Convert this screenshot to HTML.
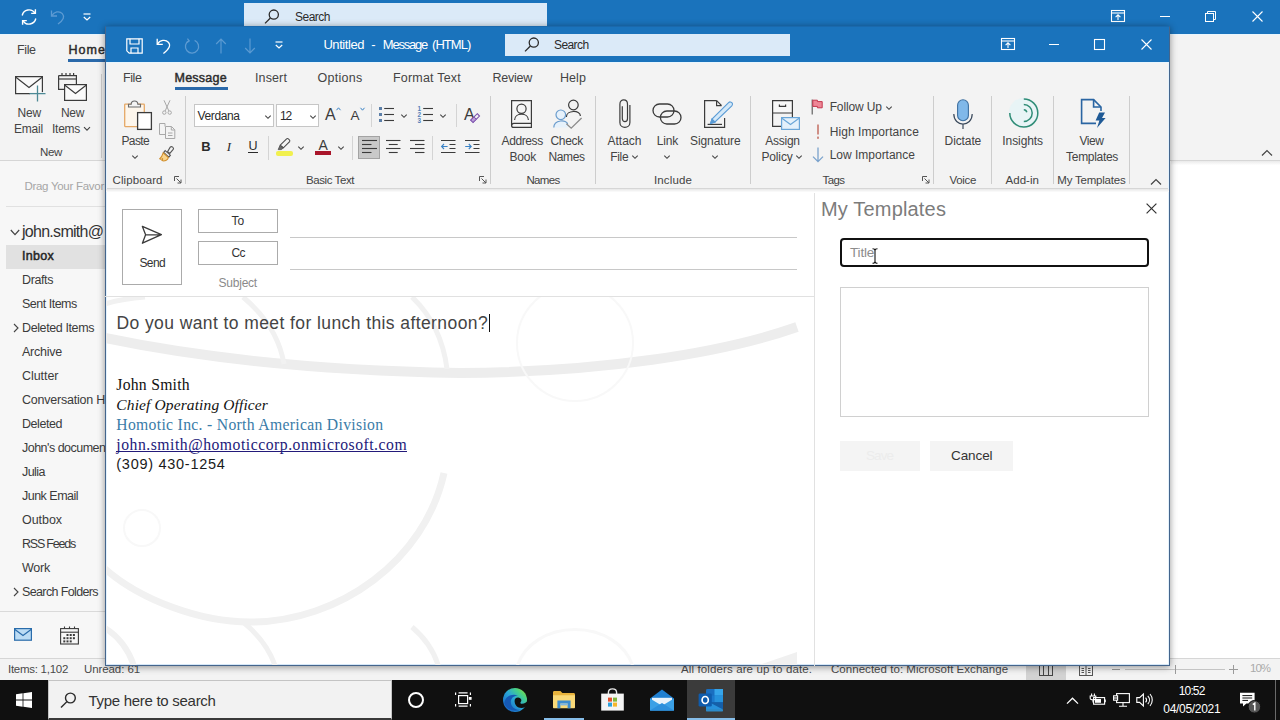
<!DOCTYPE html>
<html>
<head>
<meta charset="utf-8">
<title>Outlook</title>
<style>
*{box-sizing:border-box;margin:0;padding:0}
html,body{width:1280px;height:720px;overflow:hidden;background:#fff;font-family:"Liberation Sans",sans-serif;font-size:12px;color:#333}
.abs{position:absolute}
.t{position:absolute;white-space:nowrap;line-height:1}
svg{position:absolute;overflow:visible}
/* main window */
#mw-title{left:0;top:0;width:1280px;height:34px;background:#1a73bc}
#mw-ribbon{left:0;top:34px;width:1280px;height:127px;background:#f3f3f3;border-bottom:1px solid #d6d6d6}
#mw-left{left:0;top:161px;width:110px;height:497px;background:#f7f7f7}
#mw-status{left:0;top:658px;width:1280px;height:22px;background:#f3f3f3;border-top:1px solid #d6d6d6}
.search{background:#dbe9f6}
/* taskbar */
#tb{left:0;top:680px;width:1280px;height:40px;background:#101010}
/* compose window */
#cw{left:105px;top:26px;width:1065px;height:640px;background:#fff;border:1px solid #44658c;border-top-color:#1a69ad;box-shadow:0 1px 7px rgba(0,0,0,.42)}
#cw-title{left:0;top:0;width:1063px;height:35px;background:#1a73bc}
#cw-ribbon{left:0;top:35px;width:1063px;height:127px;background:#f3f3f3;border-bottom:1px solid #d6d6d6}
.sep{position:absolute;width:1px;background:#c8c8c8}
.gl{position:absolute;white-space:nowrap;line-height:1;font-size:11.5px;color:#444}
.rl{position:absolute;white-space:nowrap;line-height:16px;font-size:12px;color:#333;text-align:center}
.fold{position:absolute;left:22px;white-space:nowrap;line-height:1;font-size:12.5px;color:#333}
</style>
</head>
<body>
<!-- ============ MAIN WINDOW ============ -->
<div class="abs" id="mw-title"></div>
<div class="abs" id="mw-ribbon"></div>
<div class="abs" id="mw-left"></div>
<div class="abs" id="mw-status"></div>
<svg style="left:19px;top:7px" width="20" height="20" viewBox="0 0 20 20"><g fill="none" stroke="#fff" stroke-width="1.4"><path d="M3.2 8.5A7 7 0 0 1 16 6.2"/><path d="M16.8 11.5A7 7 0 0 1 4 13.8"/><path d="M16.4 2.2V6.4H12.2"/><path d="M3.6 17.8V13.6H7.8"/></g></svg>
<svg style="left:49px;top:8px" width="18" height="18" viewBox="0 0 18 18"><g fill="none" stroke="#5d9bd3" stroke-width="1.3"><path d="M2.5 2.5V8H8"/><path d="M2.8 7.8C5 3.5 10.5 2.6 13.3 5.6C16 8.6 14.5 12 9 16"/></g></svg>
<svg style="left:82px;top:12px" width="10" height="10" viewBox="0 0 10 10"><g fill="none" stroke="#fff" stroke-width="1.2"><path d="M1.5 2H8.5"/><path d="M1.8 5L5 8L8.2 5"/></g></svg>
<div class="abs" style="left:244px;top:3px;width:303px;height:27px;background:#dbeaf8"></div>
<svg style="left:263px;top:8px" width="18" height="18" viewBox="0 0 18 18"><g fill="none" stroke="#2b2b2b" stroke-width="1.3"><circle cx="10.8" cy="6.6" r="4.6"/><path d="M7.4 10L2 15.4"/></g></svg>
<span class="t" style="left:295.0px;top:10.6px;font-size:12px;color:#2b2b2b;letter-spacing:-0.50px;">Search</span>
<svg style="left:1111px;top:10px" width="14" height="12" viewBox="0 0 14 12"><g fill="none" stroke="#fff" stroke-width="1.1"><rect x="0.5" y="0.5" width="13" height="11"/><path d="M0.5 3H13.5"/><path d="M7 10V5M4.6 7.2L7 4.8L9.4 7.2"/></g></svg>
<div class="abs" style="left:1160px;top:16px;width:10px;height:1px;background:#fff"></div>
<svg style="left:1205px;top:11px" width="11" height="11" viewBox="0 0 11 11"><g fill="none" stroke="#fff" stroke-width="1"><rect x="0.5" y="2.5" width="8" height="8"/><path d="M2.5 2.5V0.5H10.5V8.5H8.5"/></g></svg>
<svg style="left:1252px;top:11px" width="11" height="11" viewBox="0 0 11 11"><g fill="none" stroke="#fff" stroke-width="1.1"><path d="M0.5 0.5L10.5 10.5M10.5 0.5L0.5 10.5"/></g></svg>
<div class="abs" style="left:0px;top:34px;width:1280px;height:1px;background:#e8f5fd"></div>
<span class="t" style="left:17.0px;top:43.7px;font-size:12.5px;color:#444;letter-spacing:-0.39px;">File</span>
<span class="t" style="left:68.5px;top:43.7px;font-size:12.5px;color:#2b2b2b;letter-spacing:1.04px;-webkit-text-stroke:0.45px #2b2b2b;">Home</span>
<div class="abs" style="left:68px;top:59px;width:45px;height:2.5px;background:#2a69aa"></div>
<svg style="left:14px;top:75px" width="32" height="28" viewBox="0 0 32 28"><g fill="none" stroke="#3b3b3b" stroke-width="1.2"><path d="M1.6 1.6H28.4V18.6H1.6Z" fill="#fafafa"/><path d="M1.6 2L15 12.4L28.4 2"/></g><path d="M16 18.6H31" stroke="#f3f3f3" stroke-width="3"/><g stroke="#4d8a96" stroke-width="1.3" fill="none"><path d="M15.5 18.6H31.5M23.5 10.6V26.4"/></g></svg>
<span class="t" style="left:17.5px;top:107.1px;font-size:12px;color:#444;letter-spacing:-0.17px;">New</span>
<span class="t" style="left:14.0px;top:123.1px;font-size:12px;color:#444;letter-spacing:-0.20px;">Email</span>
<svg style="left:57px;top:72px" width="32" height="30" viewBox="0 0 32 30"><g fill="none" stroke="#3b3b3b" stroke-width="1.2"><path d="M1.6 3.6H19.4V13M1.6 3.6V17.4H7"/><path d="M1.6 7H19.4"/><path d="M5 1V4M9 1V4M13 1V4M16.6 1V4"/><rect x="7.6" y="12.6" width="21.8" height="15.8" fill="#fafafa"/><path d="M7.6 13L18.5 21.4L29.4 13"/></g></svg>
<span class="t" style="left:61.0px;top:107.1px;font-size:12px;color:#444;letter-spacing:-0.34px;">New</span>
<span class="t" style="left:52.0px;top:123.1px;font-size:12px;color:#444;letter-spacing:-0.27px;">Items</span>
<svg style="left:83px;top:126px" width="8" height="6" viewBox="0 0 8 6"><path d="M1 1.2L4 4.2L7 1.2" fill="none" stroke="#444" stroke-width="1.1"/></svg>
<span class="t" style="left:40.0px;top:146.6px;font-size:11.5px;color:#444;letter-spacing:-0.34px;">New</span>
<div class="abs" style="left:101px;top:74px;width:1px;height:84px;background:#d0d0d0"></div>
<svg style="left:1261px;top:149px" width="12" height="8" viewBox="0 0 12 8"><path d="M1 6.5L6 1.5L11 6.5" fill="none" stroke="#444" stroke-width="1.2"/></svg>
<div class="abs" style="left:1171px;top:161px;width:109px;height:4px;background:linear-gradient(#eaeaea,#fefefe)"></div>
<span class="t" style="left:24.4px;top:180.6px;font-size:11.5px;color:#a6a6a6;letter-spacing:-0.28px;">Drag Your Favor</span>
<div class="abs" style="left:6px;top:206px;width:100px;height:1px;background:#e1e1e1"></div>
<svg style="left:10px;top:229px" width="10" height="8" viewBox="0 0 10 8"><path d="M0.8 1L5 5.6L9.2 1" fill="none" stroke="#444" stroke-width="1.2"/></svg>
<span class="t" style="left:22.0px;top:224.3px;font-size:16px;color:#333;letter-spacing:-0.72px;">john.smith@</span>
<div class="abs" style="left:6px;top:245px;width:100px;height:24px;background:#e1e1e1"></div>
<span class="t" style="left:22.0px;top:249.7px;font-size:12.5px;color:#262626;letter-spacing:0.28px;-webkit-text-stroke:0.5px #262626;">Inbox</span>
<span class="t" style="left:22.0px;top:273.7px;font-size:12.5px;color:#3b3b3b;letter-spacing:-0.39px;">Drafts</span>
<span class="t" style="left:22.0px;top:297.7px;font-size:12.5px;color:#3b3b3b;letter-spacing:-0.50px;">Sent Items</span>
<span class="t" style="left:22.0px;top:321.7px;font-size:12.5px;color:#3b3b3b;letter-spacing:-0.39px;">Deleted Items</span>
<span class="t" style="left:22.0px;top:345.7px;font-size:12.5px;color:#3b3b3b;letter-spacing:-0.24px;">Archive</span>
<span class="t" style="left:22.0px;top:369.7px;font-size:12.5px;color:#3b3b3b;letter-spacing:-0.05px;">Clutter</span>
<span class="t" style="left:22.0px;top:393.7px;font-size:12.5px;color:#3b3b3b;letter-spacing:-0.23px;">Conversation H</span>
<span class="t" style="left:22.0px;top:417.7px;font-size:12.5px;color:#3b3b3b;letter-spacing:-0.44px;">Deleted</span>
<span class="t" style="left:22.0px;top:441.7px;font-size:12.5px;color:#3b3b3b;letter-spacing:-0.51px;">John's documen</span>
<span class="t" style="left:22.0px;top:465.7px;font-size:12.5px;color:#3b3b3b;letter-spacing:-0.54px;">Julia</span>
<span class="t" style="left:22.0px;top:489.7px;font-size:12.5px;color:#3b3b3b;letter-spacing:-0.51px;">Junk Email</span>
<span class="t" style="left:22.0px;top:513.7px;font-size:12.5px;color:#3b3b3b;letter-spacing:-0.05px;">Outbox</span>
<span class="t" style="left:22.0px;top:537.7px;font-size:12.5px;color:#3b3b3b;letter-spacing:-1.20px;">RSS Feeds</span>
<span class="t" style="left:22.0px;top:561.7px;font-size:12.5px;color:#3b3b3b;letter-spacing:-0.23px;">Work</span>
<span class="t" style="left:22.0px;top:585.7px;font-size:12.5px;color:#3b3b3b;letter-spacing:-0.63px;">Search Folders</span>
<svg style="left:13px;top:323px" width="6" height="10" viewBox="0 0 6 10"><path d="M1 1L5 5L1 9" fill="none" stroke="#444" stroke-width="1.1"/></svg>
<svg style="left:13px;top:587px" width="6" height="10" viewBox="0 0 6 10"><path d="M1 1L5 5L1 9" fill="none" stroke="#444" stroke-width="1.1"/></svg>
<div class="abs" style="left:0px;top:611px;width:105px;height:1px;background:#dadada"></div>
<svg style="left:14px;top:628px" width="18" height="13" viewBox="0 0 18 13"><g fill="#bcdcf4" stroke="#2a6cab" stroke-width="1.2"><rect x="0.6" y="0.6" width="16.8" height="11.6"/><path d="M0.6 1.2L9 7.4L17.4 1.2" fill="none"/></g></svg>
<svg style="left:59.5px;top:625.8px" width="19" height="19" viewBox="0 0 19 19"><g fill="none" stroke="#3b3b3b" stroke-width="1.1"><rect x="0.6" y="2.6" width="17.8" height="15.4"/><path d="M0.6 6.2H18.4"/><path d="M4.5 0.5V3M9.5 0.5V3M14.5 0.5V3"/></g><g fill="#3b3b3b"><rect x="6.5" y="8" width="2" height="2"/><rect x="9.7" y="8" width="2" height="2"/><rect x="12.9" y="8" width="2" height="2"/><rect x="3.3" y="11.2" width="2" height="2"/><rect x="6.5" y="11.2" width="2" height="2"/><rect x="9.7" y="11.2" width="2" height="2"/><rect x="12.9" y="11.2" width="2" height="2"/><rect x="3.3" y="14.4" width="2" height="2"/><rect x="6.5" y="14.4" width="2" height="2"/><rect x="9.7" y="14.4" width="2" height="2"/></g></svg>
<span class="t" style="left:8.0px;top:663.8px;font-size:11.5px;color:#4a4a4a;letter-spacing:-0.27px;">Items: 1,102</span>
<span class="t" style="left:84.0px;top:663.8px;font-size:11.5px;color:#4a4a4a;letter-spacing:-0.09px;">Unread: 61</span>
<span class="t" style="left:681.0px;top:663.8px;font-size:11.5px;color:#4a4a4a;letter-spacing:0.12px;">All folders are up to date.</span>
<span class="t" style="left:831.0px;top:663.8px;font-size:11.5px;color:#4a4a4a;letter-spacing:0.04px;">Connected to: Microsoft Exchange</span>
<div class="abs" style="left:1026px;top:659px;width:40px;height:21px;background:#d2d2d2"></div>
<svg style="left:1039px;top:665px" width="14" height="11" viewBox="0 0 14 11"><g fill="none" stroke="#444" stroke-width="1"><rect x="0.5" y="0.5" width="13" height="10"/><path d="M4.5 0.5V10.5M9.5 0.5V10.5"/></g></svg>
<svg style="left:1079px;top:665px" width="14" height="11" viewBox="0 0 14 11"><g fill="none" stroke="#555" stroke-width="1"><rect x="0.5" y="0.5" width="13" height="10"/><path d="M7 0.5V10.5M2.5 3.5H5M2.5 5.5H5M2.5 7.5H5M9 3.5H11.5M9 5.5H11.5M9 7.5H11.5"/></g></svg>
<div class="abs" style="left:1112px;top:669px;width:8px;height:1px;background:#9a9a9a"></div>
<div class="abs" style="left:1125px;top:669px;width:100px;height:1px;background:#c4c4c4"></div>
<div class="abs" style="left:1175px;top:665px;width:1px;height:9px;background:#9a9a9a"></div>
<div class="abs" style="left:1229px;top:669px;width:9px;height:1px;background:#9a9a9a"></div>
<div class="abs" style="left:1233px;top:665px;width:1px;height:9px;background:#9a9a9a"></div>
<span class="t" style="left:1250.0px;top:663.4px;font-size:11.5px;color:#aaa;letter-spacing:-1.01px;">10%</span>

<!-- ============ TASKBAR ============ -->
<div class="abs" id="tb"></div>
<svg style="left:16px;top:692px" width="16" height="16" viewBox="0 0 16 16"><g fill="#fff"><path d="M0 2.2L6.6 1.3V7.6H0Z"/><path d="M7.4 1.2L16 0V7.6H7.4Z"/><path d="M0 8.4H6.6V14.7L0 13.8Z"/><path d="M7.4 8.4H16V16L7.4 14.8Z"/></g></svg>
<div class="abs" style="left:48px;top:680px;width:344px;height:40px;background:#f2f2f2;border:1px solid #c4c4c4;border-bottom:2px solid #3a3a3a"></div>
<svg style="left:60px;top:692px" width="17" height="16" viewBox="0 0 17 16"><g fill="none" stroke="#2b2b2b" stroke-width="1.4"><circle cx="10.4" cy="6" r="4.9"/><path d="M6.8 9.8L1 15.4"/></g></svg>
<span class="t" style="left:88.4px;top:693.0px;font-size:15px;color:#333;letter-spacing:-0.28px;">Type here to search</span>
<svg style="left:407px;top:691px" width="18" height="18" viewBox="0 0 18 18"><circle cx="9" cy="9" r="7" fill="none" stroke="#fff" stroke-width="2"/></svg>
<svg style="left:455px;top:692px" width="18" height="15" viewBox="0 0 18 15"><g fill="none" stroke="#fff" stroke-width="1.2"><rect x="3.6" y="3.6" width="9" height="8"/><path d="M0.6 0.6V3M0.6 12V14.4M3.6 0.8H12.6M3.6 14.2H12.6"/><path d="M15.4 0.6V3M15.4 12V14.4"/><rect x="14.4" y="5.6" width="1.6" height="1.6" fill="#fff"/></g></svg>
<svg style="left:502px;top:688px" width="26" height="24" viewBox="0 0 26 24"><defs><linearGradient id="eg1" x1="0.1" y1="0.9" x2="0.9" y2="0.1"><stop offset="0" stop-color="#1763c4"/><stop offset="0.5" stop-color="#2aa6d8"/><stop offset="0.8" stop-color="#45cf8a"/><stop offset="1" stop-color="#7ad84a"/></linearGradient></defs><circle cx="13" cy="12" r="12" fill="url(#eg1)"/><path d="M2.4 15.5C4.5 21.5 12 24.5 19 21.5C14 22.5 8.6 19 8.8 13.6C9 9.6 12.4 7.4 16 7.8C10.5 4.6 2.5 8.5 2.4 15.5Z" fill="#1558b4"/><path d="M12.6 13.4C12.2 10.4 15.4 8.6 18.2 10.2C19.8 11.2 19.6 13 18.6 14.2C18 15 18.6 15.8 20 15.8C22.6 15.8 24.6 14.6 26 12.6L26 16.5C24 19.5 20 20.6 16.6 19.4C14 18.4 12.8 16 12.6 13.4Z" fill="#101010"/></svg>
<svg style="left:552px;top:690px" width="24" height="19" viewBox="0 0 24 19"><path d="M1 2.4C1 1.6 1.6 1 2.4 1H8.4L10.4 3H21.6C22.4 3 23 3.6 23 4.4V16.6H1Z" fill="#e8b33c"/><path d="M1 5.2H23V17.2C23 17.8 22.6 18.2 22 18.2H2C1.4 18.2 1 17.8 1 17.2Z" fill="#f9d978"/><path d="M5.4 18.2V10.6H18.6V18.2H15.6V13.4H8.4V18.2Z" fill="#3e8dcf"/><rect x="8.4" y="13.4" width="7.2" height="2" fill="#7fb6e4"/></svg>
<div class="abs" style="left:544px;top:718px;width:40px;height:2px;background:#86bde8"></div>
<svg style="left:600px;top:688px" width="25" height="24" viewBox="0 0 25 24"><path d="M8.4 6V4.6C8.4 -0.4 16.6 -0.4 16.6 4.6V6" fill="none" stroke="#e8e8e8" stroke-width="1.4"/><path d="M1.2 5.6H23.8V22.6H1.2Z" fill="#f4f4f4"/><rect x="8" y="9.6" width="4" height="4" fill="#e5512d"/><rect x="13" y="9.6" width="4" height="4" fill="#80b73c"/><rect x="8" y="14.6" width="4" height="4" fill="#2da0dc"/><rect x="13" y="14.6" width="4" height="4" fill="#f5b62a"/></svg>
<svg style="left:649px;top:688px" width="26" height="24" viewBox="0 0 26 24"><path d="M1 10.4L13 1.4L25 10.4V22.6H1Z" fill="#1f7fd0"/><path d="M3 9.8H23V20H3Z" fill="#e9f3fb"/><path d="M1 10.4L13 17.8L25 10.4V22.6H1Z" fill="#3ba0e6"/><path d="M1 22.6L13 15L25 22.6Z" fill="#2c8fdc"/></svg>
<div class="abs" style="left:687px;top:680px;width:48px;height:40px;background:#3b3b3b"></div>
<div class="abs" style="left:687px;top:718px;width:48px;height:2px;background:#86bde8"></div>
<svg style="left:698px;top:688px" width="26" height="24" viewBox="0 0 26 24"><rect x="8" y="1" width="17" height="20" rx="1.4" fill="#1a6ec0"/><rect x="16.5" y="1" width="8.5" height="6.6" fill="#36a5ea"/><rect x="8" y="7.6" width="8.5" height="6.6" fill="#1b78cc"/><rect x="16.5" y="7.6" width="8.5" height="6.6" fill="#2692dc"/><rect x="8" y="14.2" width="17" height="6.8" fill="#155fa8"/><path d="M8 12.6L25 21.6V22.4C25 23 24.6 23.4 24 23.4H9C8.4 23.4 8 23 8 22.4Z" fill="#2a9ae4" opacity=".85"/><rect x="0.6" y="5.4" width="13.2" height="13.2" rx="1.4" fill="#0f5cad"/><ellipse cx="7.2" cy="12" rx="3.1" ry="3.5" fill="none" stroke="#fff" stroke-width="1.7"/></svg>
<svg style="left:1066px;top:697px" width="13" height="8" viewBox="0 0 13 8"><path d="M1 6.6L6.5 1.2L12 6.6" fill="none" stroke="#fff" stroke-width="1.3"/></svg>
<svg style="left:1089px;top:693px" width="17" height="13" viewBox="0 0 17 13"><g fill="none" stroke="#fff" stroke-width="1.1"><rect x="4.6" y="4.6" width="11" height="6.6"/><path d="M16 6.6V9.2" stroke-width="1.6"/><path d="M2.6 0.5V3M5.4 0.5V3M1.2 3H6.8V5.2C6.8 7.4 1.2 7.4 1.2 5.2ZM4 7V9.6"/></g><rect x="6" y="6" width="6" height="3.8" fill="#fff"/></svg>
<svg style="left:1113px;top:693px" width="17" height="14" viewBox="0 0 17 14"><g fill="none" stroke="#fff" stroke-width="1.1"><rect x="3.6" y="0.6" width="12.8" height="9"/><path d="M10 9.6V13M6 13.2H14"/><rect x="0.6" y="2.8" width="4" height="4.4" fill="#101010"/><path d="M0.6 5H4.6"/></g></svg>
<svg style="left:1136px;top:693px" width="17" height="14" viewBox="0 0 17 14"><g fill="none" stroke="#fff" stroke-width="1.1"><path d="M0.8 4.6H3.6L7.4 1V13L3.6 9.4H0.8Z"/><path d="M9.6 4.6C10.8 6 10.8 8 9.6 9.4"/><path d="M11.8 2.8C14 5.2 14 8.8 11.8 11.2"/><path d="M14 1C17 4.4 17 9.6 14 13"/></g></svg>
<span class="t" style="left:1178.8px;top:685.1px;font-size:12px;color:#fff;letter-spacing:-0.87px;">10:52</span>
<span class="t" style="left:1163.3px;top:702.5px;font-size:12px;color:#fff;letter-spacing:-0.31px;">04/05/2021</span>
<svg style="left:1239px;top:692px" width="22" height="22" viewBox="0 0 22 22"><path d="M1 0.8H15.6V11.4H7.4L4 14.6V11.4H1Z" fill="#fff"/><path d="M3.4 3.6H13.2M3.4 6H13.2M3.4 8.4H9" stroke="#101010" stroke-width="1"/><circle cx="15.4" cy="14.8" r="6.3" fill="#555" stroke="#101010" stroke-width="1"/><path d="M13.8 12.6L15.8 11.2V18.4" fill="none" stroke="#fff" stroke-width="1.4"/></svg>
<div class="abs" style="left:1275px;top:680px;width:1px;height:40px;background:#6a6a6a"></div>

<!-- ============ COMPOSE WINDOW ============ -->
<div class="abs" id="cw">
<div class="abs" id="cw-title"></div>
<div class="abs" id="cw-ribbon"></div>
<svg style="left:20px;top:11px" width="17" height="16" viewBox="0 0 17 16"><g fill="none" stroke="#fff" stroke-width="1.2"><path d="M0.8 0.8H16.2V15.2H3.2L0.8 12.8Z"/><path d="M4 0.8V6H13V0.8"/><path d="M5 15.2V10H12V15.2"/></g></svg>
<svg style="left:50px;top:11px" width="16" height="16" viewBox="0 0 16 16"><g fill="none" stroke="#fff" stroke-width="1.3"><path d="M1.2 0.8V6.4H6.8"/><path d="M1.4 6.2C4 1.8 9.6 1.2 12.3 4.2C15 7.4 13.4 10.8 7.4 15.4"/></g></svg>
<svg style="left:78px;top:11px" width="16" height="16" viewBox="0 0 16 16"><g fill="none" stroke="#5b9ad2" stroke-width="1.3"><path d="M10.6 2.4A6.6 6.6 0 1 1 5 2.6"/><path d="M3.4 0.6L5.2 2.8L3 4.6" /></g></svg>
<svg style="left:109px;top:11px" width="12" height="16" viewBox="0 0 12 16"><g fill="none" stroke="#5b9ad2" stroke-width="1.2"><path d="M6 15.5V1.2M1.2 6L6 1.2L10.8 6"/></g></svg>
<svg style="left:138px;top:11px" width="12" height="16" viewBox="0 0 12 16"><g fill="none" stroke="#5b9ad2" stroke-width="1.2"><path d="M6 0.5V14.8M1.2 10L6 14.8L10.8 10"/></g></svg>
<svg style="left:168px;top:13px" width="10" height="10" viewBox="0 0 10 10"><g fill="none" stroke="#fff" stroke-width="1.2"><path d="M1.5 2H8.5"/><path d="M1.8 5L5 8L8.2 5"/></g></svg>
<span class="t" style="left:217.4px;top:10.9px;font-size:13px;color:#fff;letter-spacing:-0.43px;">Untitled</span>
<span class="t" style="left:265.2px;top:10.9px;font-size:13px;color:#fff;letter-spacing:0.07px;">-</span>
<span class="t" style="left:276.8px;top:10.9px;font-size:13px;color:#fff;letter-spacing:-1.20px;">Message</span>
<span class="t" style="left:326.0px;top:10.9px;font-size:13px;color:#fff;letter-spacing:-0.94px;">(HTML)</span>
<div class="abs" style="left:399px;top:7px;width:285px;height:22px;background:#dbeaf8"></div>
<svg style="left:417px;top:9px" width="18" height="18" viewBox="0 0 18 18"><g fill="none" stroke="#2b2b2b" stroke-width="1.3"><circle cx="10.8" cy="6.6" r="4.6"/><path d="M7.4 10L2 15.4"/></g></svg>
<span class="t" style="left:448.0px;top:11.6px;font-size:12px;color:#2b2b2b;letter-spacing:-0.59px;">Search</span>
<svg style="left:895px;top:11px" width="14" height="12" viewBox="0 0 14 12"><g fill="none" stroke="#fff" stroke-width="1.1"><rect x="0.5" y="0.5" width="13" height="11"/><path d="M0.5 3H13.5"/><path d="M7 10V5M4.6 7.2L7 4.8L9.4 7.2"/></g></svg>
<div class="abs" style="left:943px;top:17px;width:10px;height:1px;background:#fff"></div>
<svg style="left:988px;top:12px" width="11" height="11" viewBox="0 0 11 11"><rect x="0.5" y="0.5" width="10" height="10" fill="none" stroke="#fff" stroke-width="1.1"/></svg>
<svg style="left:1035px;top:12px" width="11" height="11" viewBox="0 0 11 11"><path d="M0.5 0.5L10.5 10.5M10.5 0.5L0.5 10.5" fill="none" stroke="#fff" stroke-width="1.1"/></svg>
<div class="abs" style="left:0px;top:35px;width:1063px;height:1px;background:#e8f5fd"></div>
<span class="t" style="left:17.0px;top:45.0px;font-size:12.5px;color:#444;letter-spacing:-0.41px;">File</span>
<span class="t" style="left:68.5px;top:45.0px;font-size:12.5px;color:#2b2b2b;letter-spacing:0.25px;-webkit-text-stroke:0.45px #2b2b2b;">Message</span>
<span class="t" style="left:149.0px;top:45.0px;font-size:12.5px;color:#444;letter-spacing:0.12px;">Insert</span>
<span class="t" style="left:211.5px;top:45.0px;font-size:12.5px;color:#444;letter-spacing:0.27px;">Options</span>
<span class="t" style="left:287.0px;top:45.0px;font-size:12.5px;color:#444;letter-spacing:0.20px;">Format Text</span>
<span class="t" style="left:386.5px;top:45.0px;font-size:12.5px;color:#444;letter-spacing:-0.25px;">Review</span>
<span class="t" style="left:454.0px;top:45.0px;font-size:12.5px;color:#444;letter-spacing:0.07px;">Help</span>
<div class="abs" style="left:68.5px;top:60px;width:53px;height:2.5px;background:#2a69aa"></div>
<svg style="left:17px;top:72px" width="30" height="32" viewBox="0 0 30 32"><rect x="1.7" y="5.2" width="19.6" height="22.4" rx="0.5" fill="#fdf6ec" stroke="#e5a866" stroke-width="1.3"/><path d="M5.5 8V5.2H8.2C8.2 1 14.8 1 14.8 5.2H17.5V8Z" fill="#f3f3f3" stroke="#6a6a6a" stroke-width="1.1"/><rect x="14.6" y="13.6" width="13.8" height="16.8" fill="#fff" stroke="#3b3b3b" stroke-width="1.3"/></svg>
<span class="t" style="left:15.5px;top:107.5px;font-size:12px;color:#444;letter-spacing:-0.64px;">Paste</span>
<svg style="left:24.5px;top:126.5px" width="8" height="6" viewBox="0 0 8 6"><path d="M1.3 1.6L4 4.3L6.7 1.6" fill="none" stroke="#444" stroke-width="1.1"/></svg>
<svg style="left:56px;top:73px" width="10" height="15" viewBox="0 0 10 15"><g fill="none" stroke="#a8a8a8" stroke-width="1"><path d="M2 0.3L6.9 11M8 0.3L3.1 11"/><circle cx="2.3" cy="12.6" r="1.7"/><circle cx="7.7" cy="12.6" r="1.7"/></g></svg>
<svg style="left:53px;top:96px" width="17" height="16" viewBox="0 0 17 16"><g fill="none" stroke="#a8a8a8" stroke-width="1"><path d="M6 3.5V0.5H0.5V11.5H6"/><path d="M6.5 3.5H12.5L15.8 6.8V15.5H6.5Z" fill="#f3f3f3"/><path d="M12.3 3.7V7H15.6"/><path d="M9 10H13.5M9 12.5H13.5"/></g></svg>
<svg style="left:53px;top:119px" width="17" height="16" viewBox="0 0 17 16"><g stroke-width="1.1"><path d="M11.2 1.2C12.6 -0.2 15.4 1.6 14.2 3.4L10.8 7.4L8.6 5.6Z" fill="#f3f3f3" stroke="#555"/><path d="M6.2 4.6L11.4 9.2L9.8 11.2L4.6 6.4Z" fill="#f3f3f3" stroke="#555"/><path d="M4.2 6.8L9.4 11.6C8.6 14.4 5.4 15.6 3 14.6C3.6 13.8 3.8 13.2 3.6 12.6C2.6 13.4 1.6 13.4 0.8 12.8C2.6 11.4 3.4 9.2 4.2 6.8Z" fill="#f9d58d" stroke="#d18f2c"/></g></svg>
<span class="t" style="left:6.5px;top:147.8px;font-size:11.5px;color:#444;letter-spacing:0.09px;">Clipboard</span>
<svg style="left:68px;top:149px" width="8" height="8" viewBox="0 0 8 8"><g fill="none" stroke="#555" stroke-width="1"><path d="M0.5 5V0.5H5"/><path d="M2.5 2.5L7 7M7 3.5V7H3.5"/></g></svg>
<div class="abs" style="left:79px;top:69px;width:1px;height:88px;background:#cdcdcd"></div>
<div class="abs" style="left:88px;top:77px;width:80px;height:23px;background:#fff;border:1px solid #c6c6c6"></div>
<span class="t" style="left:91.5px;top:82.8px;font-size:12px;color:#2b2b2b;letter-spacing:-0.36px;">Verdana</span>
<svg style="left:157.7px;top:86.5px" width="8" height="6" viewBox="0 0 8 6"><path d="M1.3 1.6L4 4.3L6.7 1.6" fill="none" stroke="#444" stroke-width="1.1"/></svg>
<div class="abs" style="left:170px;top:77px;width:43px;height:23px;background:#fff;border:1px solid #c6c6c6"></div>
<span class="t" style="left:174.0px;top:82.8px;font-size:12px;color:#2b2b2b;letter-spacing:-1.17px;">12</span>
<svg style="left:202.7px;top:86.5px" width="8" height="6" viewBox="0 0 8 6"><path d="M1.3 1.6L4 4.3L6.7 1.6" fill="none" stroke="#444" stroke-width="1.1"/></svg>
<span class="t" style="left:219.0px;top:79.8px;font-size:16px;color:#3b3b3b;letter-spacing:0.33px;">A</span>
<svg style="left:230px;top:80px" width="5" height="4" viewBox="0 0 5 4"><path d="M0.5 3.2L2.5 0.8L4.5 3.2" fill="none" stroke="#3b83c6" stroke-width="1"/></svg>
<span class="t" style="left:244.5px;top:81.9px;font-size:13.5px;color:#3b3b3b;letter-spacing:0.50px;">A</span>
<svg style="left:253.5px;top:80px" width="5" height="4" viewBox="0 0 5 4"><path d="M0.5 0.8L2.5 3.2L4.5 0.8" fill="none" stroke="#3b83c6" stroke-width="1"/></svg>
<div class="abs" style="left:265px;top:77px;width:1px;height:23px;background:#d4d4d4"></div>
<svg style="left:273px;top:80px" width="16" height="16" viewBox="0 0 16 16"><rect x="0" y="0" width="3" height="3" fill="#5c7fa8"/><path d="M5.2 1.5H15" stroke="#3b3b3b" stroke-width="1.1"/><rect x="0" y="6" width="3" height="3" fill="#5c7fa8"/><path d="M5.2 7.5H15" stroke="#3b3b3b" stroke-width="1.1"/><rect x="0" y="12" width="3" height="3" fill="#5c7fa8"/><path d="M5.2 13.5H15" stroke="#3b3b3b" stroke-width="1.1"/></svg>
<svg style="left:294.4px;top:85.5px" width="8" height="6" viewBox="0 0 8 6"><path d="M1.3 1.6L4 4.3L6.7 1.6" fill="none" stroke="#444" stroke-width="1.1"/></svg>
<svg style="left:312px;top:80px" width="16" height="16" viewBox="0 0 16 16"><text x="-0.6" y="3.6" font-family="Liberation Sans,sans-serif" font-size="6.4" font-weight="700" fill="#5580b8">1</text><path d="M5.2 1.5H15" stroke="#3b3b3b" stroke-width="1.1"/><text x="-0.6" y="9.6" font-family="Liberation Sans,sans-serif" font-size="6.4" font-weight="700" fill="#5580b8">2</text><path d="M5.2 7.5H15" stroke="#3b3b3b" stroke-width="1.1"/><text x="-0.6" y="15.6" font-family="Liberation Sans,sans-serif" font-size="6.4" font-weight="700" fill="#5580b8">3</text><path d="M5.2 13.5H15" stroke="#3b3b3b" stroke-width="1.1"/></svg>
<svg style="left:333.3px;top:85.5px" width="8" height="6" viewBox="0 0 8 6"><path d="M1.3 1.6L4 4.3L6.7 1.6" fill="none" stroke="#444" stroke-width="1.1"/></svg>
<div class="abs" style="left:350px;top:77px;width:1px;height:23px;background:#d4d4d4"></div>
<span class="t" style="left:358.0px;top:79.8px;font-size:16px;color:#3b3b3b;letter-spacing:-0.27px;">A</span>
<svg style="left:364.2px;top:86px" width="10" height="10" viewBox="0 0 10 10"><path d="M7.3 0.7L9.5 3.1L3 9.4L0.7 7Z" fill="#f3f3f3" stroke="#7d52ad" stroke-width="1.1"/><path d="M4.1 3.9L6.3 6.3L3 9.4L0.7 7Z" fill="#b99ad8" stroke="#7d52ad" stroke-width="1"/></svg>
<span class="t" style="left:95.2px;top:112.5px;font-size:13px;color:#2b2b2b;letter-spacing:-1.20px;font-weight:700;">B</span>
<span class="t" style="left:120.8px;top:112.8px;font-size:13px;color:#2b2b2b;letter-spacing:0.37px;font-style:italic;font-family:'Liberation Serif',serif;">I</span>
<span class="t" style="left:142.5px;top:112.9px;font-size:12.5px;color:#2b2b2b;letter-spacing:-0.53px;">U</span>
<div class="abs" style="left:142px;top:125px;width:9.5px;height:1px;background:#2b2b2b"></div>
<div class="abs" style="left:162px;top:109px;width:1px;height:24px;background:#d4d4d4"></div>
<svg style="left:171px;top:111px" width="15" height="13" viewBox="0 0 15 13"><path d="M9.6 0.8C10.8 -0.2 13.6 2.2 12.6 3.6L6.4 9.8L3.2 7.2Z" fill="#f3f3f3" stroke="#4a4a4a" stroke-width="1.1"/><path d="M3 7.4L6.2 10L4.4 11.6H1.2Z" fill="#6a6a6a" stroke="#4a4a4a" stroke-width="0.8"/></svg>
<div class="abs" style="left:169.5px;top:123.6px;width:17.5px;height:5.2px;background:#f1f04e;border-radius:2px"></div>
<svg style="left:191.39999999999998px;top:117.5px" width="8" height="6" viewBox="0 0 8 6"><path d="M1.3 1.6L4 4.3L6.7 1.6" fill="none" stroke="#444" stroke-width="1.1"/></svg>
<span class="t" style="left:212.5px;top:110.8px;font-size:14px;color:#3b3b3b;letter-spacing:1.16px;">A</span>
<div class="abs" style="left:209px;top:124px;width:16px;height:4px;background:#a9152a"></div>
<svg style="left:230.5px;top:117.5px" width="8" height="6" viewBox="0 0 8 6"><path d="M1.3 1.6L4 4.3L6.7 1.6" fill="none" stroke="#444" stroke-width="1.1"/></svg>
<div class="abs" style="left:246px;top:109px;width:1px;height:24px;background:#d4d4d4"></div>
<div class="abs" style="left:252px;top:109px;width:22px;height:23px;background:#c9c9c9;border:1px solid #a3a3a3"></div>
<svg style="left:255.5px;top:112.80000000000001px" width="20" height="16" viewBox="0 0 20 16"><path d="M0 0.5H15" stroke="#3b3b3b" stroke-width="1.1"/><path d="M0 4.5H9.5" stroke="#3b3b3b" stroke-width="1.1"/><path d="M0 8.5H15" stroke="#3b3b3b" stroke-width="1.1"/><path d="M0 12.5H9.5" stroke="#3b3b3b" stroke-width="1.1"/></svg>
<svg style="left:280px;top:112.80000000000001px" width="20" height="16" viewBox="0 0 20 16"><path d="M0 0.5H14.5" stroke="#3b3b3b" stroke-width="1.1"/><path d="M2.8 4.5H11.7" stroke="#3b3b3b" stroke-width="1.1"/><path d="M0 8.5H14.5" stroke="#3b3b3b" stroke-width="1.1"/><path d="M2.8 12.5H11.7" stroke="#3b3b3b" stroke-width="1.1"/></svg>
<svg style="left:304px;top:112.80000000000001px" width="20" height="16" viewBox="0 0 20 16"><path d="M0 0.5H14.5" stroke="#3b3b3b" stroke-width="1.1"/><path d="M5 4.5H14.5" stroke="#3b3b3b" stroke-width="1.1"/><path d="M0 8.5H14.5" stroke="#3b3b3b" stroke-width="1.1"/><path d="M5 12.5H14.5" stroke="#3b3b3b" stroke-width="1.1"/></svg>
<div class="abs" style="left:326px;top:109px;width:1px;height:24px;background:#d4d4d4"></div>
<svg style="left:335px;top:112.80000000000001px" width="16" height="14" viewBox="0 0 16 14"><g stroke="#3b3b3b" stroke-width="1.1"><path d="M0 0.5H14.5M8.5 4.5H14.5M8.5 8.5H14.5M0 12.5H14.5"/></g><g fill="none" stroke="#3b83c6" stroke-width="1.1"><path d="M0.6 6.5H6.6M3 4L0.6 6.5L3 9"/></g></svg>
<svg style="left:358.5px;top:112.80000000000001px" width="16" height="14" viewBox="0 0 16 14"><g stroke="#3b3b3b" stroke-width="1.1"><path d="M0 0.5H14.5M8.5 4.5H14.5M8.5 8.5H14.5M0 12.5H14.5"/></g><g fill="none" stroke="#3b83c6" stroke-width="1.1"><path d="M0.2 6.5H6.2M3.8 4L6.2 6.5L3.8 9"/></g></svg>
<span class="t" style="left:200.0px;top:147.8px;font-size:11.5px;color:#444;letter-spacing:-0.42px;">Basic Text</span>
<svg style="left:373px;top:149px" width="8" height="8" viewBox="0 0 8 8"><g fill="none" stroke="#555" stroke-width="1"><path d="M0.5 5V0.5H5"/><path d="M2.5 2.5L7 7M7 3.5V7H3.5"/></g></svg>
<div class="abs" style="left:384px;top:69px;width:1px;height:88px;background:#cdcdcd"></div>
<svg style="left:404px;top:72px" width="23" height="30" viewBox="0 0 23 30"><g fill="none" stroke="#3b3b3b" stroke-width="1.2"><path d="M1.6 1.6H21.4V28.4H3.6C2.4 28.4 1.6 27.6 1.6 26.4Z" fill="#f6f6f6"/><path d="M1.6 26.6C1.6 25.2 2.6 24.4 3.8 24.4H21.4"/><circle cx="11.5" cy="9.8" r="4.6"/><path d="M4.6 21C4.6 13.2 18.4 13.2 18.4 21"/></g></svg>
<span class="t" style="left:395.6px;top:107.8px;font-size:12px;color:#444;letter-spacing:-0.40px;">Address</span>
<span class="t" style="left:403.4px;top:123.6px;font-size:12px;color:#444;letter-spacing:-0.19px;">Book</span>
<svg style="left:447px;top:72px" width="31" height="30" viewBox="0 0 31 30"><g fill="none" stroke-width="1.2"><circle cx="20.4" cy="6" r="4.8" stroke="#3b3b3b"/><path d="M13.4 18C13.4 10.8 27.4 10.8 27.4 17" stroke="#3b3b3b"/><circle cx="7.8" cy="15.8" r="4.8" stroke="#6a9ccd" fill="#e6f1fb"/><path d="M0.8 28.6C0.8 20.4 14.8 20.4 14.8 26.4V28.6Z" stroke="none" fill="#e6f1fb"/><path d="M0.8 28.6C0.8 20.4 14 20.4 14.6 25" stroke="#6a9ccd"/><path d="M13.4 24.8L18.2 29.2L28.6 19" stroke="#8c8c8c" stroke-width="1.3"/></g></svg>
<span class="t" style="left:444.5px;top:107.8px;font-size:12px;color:#444;letter-spacing:-0.30px;">Check</span>
<span class="t" style="left:442.5px;top:123.6px;font-size:12px;color:#444;letter-spacing:-0.40px;">Names</span>
<span class="t" style="left:420.5px;top:147.8px;font-size:11.5px;color:#444;letter-spacing:-0.69px;">Names</span>
<div class="abs" style="left:489px;top:69px;width:1px;height:88px;background:#cdcdcd"></div>
<svg style="left:512px;top:72px" width="13" height="30" viewBox="0 0 13 30"><path d="M11.9 6.1V23.4C11.9 30 1.9 30 1.9 23.4V5.2C1.9 -0.6 9.5 -0.6 9.5 5.2V19.4C9.5 23.6 4.3 23.6 4.3 19.4V7.3" fill="none" stroke="#3b3b3b" stroke-width="1.2"/></svg>
<span class="t" style="left:501.5px;top:107.8px;font-size:12px;color:#444;letter-spacing:-0.00px;">Attach</span>
<span class="t" style="left:504.3px;top:123.6px;font-size:12px;color:#444;letter-spacing:-0.36px;">File</span>
<svg style="left:524.5px;top:127px" width="8" height="6" viewBox="0 0 8 6"><path d="M1.3 1.6L4 4.3L6.7 1.6" fill="none" stroke="#444" stroke-width="1.1"/></svg>
<svg style="left:546px;top:76px" width="30" height="23" viewBox="0 0 30 23"><g fill="none" stroke="#3b3b3b" stroke-width="1.3"><rect x="1" y="1" width="21" height="13" rx="6.5"/><rect x="8.4" y="8" width="20.6" height="13" rx="6.5"/></g></svg>
<span class="t" style="left:550.7px;top:107.8px;font-size:12px;color:#444;letter-spacing:-0.18px;">Link</span>
<svg style="left:556.5px;top:127px" width="8" height="6" viewBox="0 0 8 6"><path d="M1.3 1.6L4 4.3L6.7 1.6" fill="none" stroke="#444" stroke-width="1.1"/></svg>
<svg style="left:597px;top:72px" width="32" height="30" viewBox="0 0 32 30"><g fill="none" stroke="#3b3b3b" stroke-width="1.2"><path d="M13.6 1.6H1.6V28.4H21.6V19"/><path d="M13.6 1.6L18.4 6.4"/><path d="M13.6 1.6V6.6H18.6"/><path d="M4.6 25.4H19"/></g><g stroke="#5a9bd5" stroke-width="1.1"><path d="M25.6 3.6C26.6 2.6 28 2.8 28.8 3.6C29.6 4.4 29.8 5.8 28.8 6.8L12 23L7.6 24.4L9 20Z" fill="#d3e8f8"/><path d="M7.6 24.4L9 20L12 23Z" fill="#5a9bd5"/></g></svg>
<span class="t" style="left:584.0px;top:107.8px;font-size:12px;color:#444;letter-spacing:-0.09px;">Signature</span>
<svg style="left:604.5px;top:127px" width="8" height="6" viewBox="0 0 8 6"><path d="M1.3 1.6L4 4.3L6.7 1.6" fill="none" stroke="#444" stroke-width="1.1"/></svg>
<span class="t" style="left:548.0px;top:147.8px;font-size:11.5px;color:#444;letter-spacing:0.13px;">Include</span>
<div class="abs" style="left:644px;top:69px;width:1px;height:88px;background:#cdcdcd"></div>
<svg style="left:665px;top:72px" width="30" height="32" viewBox="0 0 30 32"><g fill="#f8f8f8" stroke="#3b3b3b" stroke-width="1.2"><path d="M1.6 1.6H21.4V14H1.6Z"/><path d="M1.6 14V27.4H10" fill="none"/><path d="M21.4 14V18" fill="none"/><path d="M8.4 5.6V7.4H14.6V5.6" fill="none"/></g><g fill="#e4f1fb" stroke="#6aa6d8" stroke-width="1.2"><rect x="10.6" y="18.6" width="17.8" height="11.8"/><path d="M10.6 19L19.5 25.4L28.4 19" fill="none"/></g></svg>
<span class="t" style="left:659.3px;top:107.8px;font-size:12px;color:#444;letter-spacing:-0.27px;">Assign</span>
<span class="t" style="left:655.4px;top:123.6px;font-size:12px;color:#444;letter-spacing:-0.12px;">Policy</span>
<svg style="left:688.5px;top:127px" width="8" height="6" viewBox="0 0 8 6"><path d="M1.3 1.6L4 4.3L6.7 1.6" fill="none" stroke="#444" stroke-width="1.1"/></svg>
<svg style="left:705px;top:72px" width="13" height="16" viewBox="0 0 13 16"><path d="M1.2 0.6V15.4" stroke="#555" stroke-width="1.1"/><path d="M1.8 1.2H6.4V2.6H11.2V8.8H6.4V7.4H1.8Z" fill="#ee8797" stroke="#c4374e" stroke-width="1"/></svg>
<span class="t" style="left:723.7px;top:74.1px;font-size:12px;color:#444;letter-spacing:-0.15px;">Follow Up</span>
<svg style="left:778.5px;top:77.5px" width="8" height="6" viewBox="0 0 8 6"><path d="M1.3 1.6L4 4.3L6.7 1.6" fill="none" stroke="#444" stroke-width="1.1"/></svg>
<svg style="left:709.5px;top:96.5px" width="4" height="16" viewBox="0 0 4 16"><path d="M2 0.6V10.4" stroke="#cd8a80" stroke-width="1.9"/><rect x="1" y="12.6" width="2" height="2.2" fill="#cd8a80"/></svg>
<span class="t" style="left:723.7px;top:98.5px;font-size:12px;color:#444;letter-spacing:0.08px;">High Importance</span>
<svg style="left:705.5px;top:120px" width="12" height="16" viewBox="0 0 12 16"><g fill="none" stroke="#7aa2cc" stroke-width="1.3"><path d="M6 0.5V14.6M1 9.6L6 14.6L11 9.6"/></g></svg>
<span class="t" style="left:723.7px;top:122.3px;font-size:12px;color:#444;letter-spacing:-0.01px;">Low Importance</span>
<span class="t" style="left:716.6px;top:147.8px;font-size:11.5px;color:#444;letter-spacing:-0.62px;">Tags</span>
<svg style="left:816px;top:149px" width="8" height="8" viewBox="0 0 8 8"><g fill="none" stroke="#555" stroke-width="1"><path d="M0.5 5V0.5H5"/><path d="M2.5 2.5L7 7M7 3.5V7H3.5"/></g></svg>
<div class="abs" style="left:827px;top:69px;width:1px;height:88px;background:#cdcdcd"></div>
<svg style="left:846px;top:71.8px" width="22" height="31" viewBox="0 0 22 31"><rect x="5.6" y="0.8" width="10.8" height="21" rx="5.4" fill="#80b8e9" stroke="#3d6f9f" stroke-width="1.1"/><g fill="none" stroke="#3b4a5c" stroke-width="1.2"><path d="M1.8 15C1.8 28.4 20.2 28.4 20.2 15"/><path d="M11 25.2V30"/></g></svg>
<span class="t" style="left:838.6px;top:107.8px;font-size:12px;color:#444;letter-spacing:-0.11px;">Dictate</span>
<span class="t" style="left:843.5px;top:147.8px;font-size:11.5px;color:#444;letter-spacing:-0.33px;">Voice</span>
<div class="abs" style="left:885px;top:69px;width:1px;height:88px;background:#cdcdcd"></div>
<svg style="left:902px;top:71px" width="32" height="32" viewBox="0 0 32 32"><circle cx="15.8" cy="15" r="15" fill="#e2f4f7" opacity=".7"/><g fill="none" stroke="#2f8c76" stroke-width="1.5"><path d="M15.8 1A14 14 0 1 1 1.8 15"/><path d="M15.8 6.6A8.4 8.4 0 0 1 15.8 23.4"/><path d="M15.8 11.8A3.2 3.2 0 0 1 18.8 14.2"/></g></svg>
<span class="t" style="left:896.3px;top:107.8px;font-size:12px;color:#444;letter-spacing:-0.08px;">Insights</span>
<span class="t" style="left:899.5px;top:147.8px;font-size:11.5px;color:#444;letter-spacing:0.04px;">Add-in</span>
<div class="abs" style="left:947px;top:69px;width:1px;height:88px;background:#cdcdcd"></div>
<svg style="left:974px;top:71px" width="26" height="31" viewBox="0 0 26 31"><g fill="none" stroke="#2a65a2" stroke-width="1.6"><path d="M16 25.4H1.6V1.6H13.6L21 9V13"/><path d="M13.6 1.6V9H21"/></g><path d="M19.2 14.6H25L22 20H25.6L17 30L19.4 22.6H15.6Z" fill="#1f5a96"/></svg>
<span class="t" style="left:973.4px;top:107.8px;font-size:12px;color:#444;letter-spacing:-0.45px;">View</span>
<span class="t" style="left:960.1px;top:123.6px;font-size:12px;color:#444;letter-spacing:-0.31px;">Templates</span>
<span class="t" style="left:951.3px;top:147.8px;font-size:11.5px;color:#444;letter-spacing:-0.21px;">My Templates</span>
<div class="abs" style="left:1023px;top:69px;width:1px;height:88px;background:#cdcdcd"></div>
<svg style="left:1044px;top:151px" width="12" height="8" viewBox="0 0 12 8"><path d="M1 6.5L6 1.5L11 6.5" fill="none" stroke="#444" stroke-width="1.2"/></svg>
<div class="abs" style="left:0px;top:35px;width:1px;height:603px;background:#e4f2fd"></div>
<div class="abs" style="left:1062px;top:35px;width:1px;height:603px;background:#e4f2fd"></div>
<div class="abs" style="left:0px;top:637px;width:1063px;height:1px;background:#d6e7f7"></div>
<div class="abs" style="left:0px;top:162px;width:1063px;height:3px;background:linear-gradient(#e8e8e8,#fcfcfc)"></div>
<div class="abs" style="left:16px;top:182px;width:60px;height:76px;background:#fff;border:1px solid #ababab"></div>
<svg style="left:35px;top:198px" width="22" height="20" viewBox="0 0 22 20"><path d="M1.4 1.4L20.4 9.6L1.4 18.2L4.6 9.8Z M4.6 9.8H20" fill="none" stroke="#3b3b3b" stroke-width="1.3" stroke-linejoin="round"/></svg>
<span class="t" style="left:33.5px;top:229.7px;font-size:12px;color:#333;letter-spacing:-0.63px;">Send</span>
<div class="abs" style="left:92px;top:182px;width:80px;height:24px;background:#fff;border:1px solid #ababab"></div>
<span class="t" style="left:125.5px;top:187.6px;font-size:12px;color:#333;letter-spacing:-0.09px;">To</span>
<div class="abs" style="left:92px;top:214px;width:80px;height:24px;background:#fff;border:1px solid #ababab"></div>
<span class="t" style="left:125.5px;top:219.6px;font-size:12px;color:#333;letter-spacing:-0.58px;">Cc</span>
<span class="t" style="left:112.5px;top:250.1px;font-size:12px;color:#8a8a8a;letter-spacing:-0.22px;">Subject</span>
<div class="abs" style="left:184px;top:210px;width:507px;height:1px;background:#c8c8c8"></div>
<div class="abs" style="left:184px;top:242px;width:507px;height:1px;background:#c8c8c8"></div>
<div class="abs" style="left:-1px;top:269px;width:709px;height:1px;background:#e1e1e1"></div>
<svg style="left:0px;top:270px;overflow:hidden" width="708" height="368" viewBox="106 297 708 368"><path d="M105 338C220 362 340 371 460 373C600 372 720 354 797 327" fill="none" stroke="#ededed" stroke-width="10"/><path d="M243 297C268 318 280 340 284 364" fill="none" stroke="#f1f1f1" stroke-width="5"/><path d="M412 297C436 320 444 345 447 369" fill="none" stroke="#f1f1f1" stroke-width="5"/><circle cx="575" cy="343" r="58" fill="none" stroke="#f8f8f8" stroke-width="2"/><path d="M105 304C118 300 130 298 145 297" fill="none" stroke="#f1f1f1" stroke-width="5"/><path d="M104 568C140 600 200 622 250 622C340 622 425 560 444 473" fill="none" stroke="#f1f1f1" stroke-width="7"/><path d="M243 622C258 634 270 650 276 668" fill="none" stroke="#f1f1f1" stroke-width="5"/><circle cx="142" cy="528" r="18" fill="none" stroke="#f8f8f8" stroke-width="2"/><path d="M105 628C118 636 128 648 134 666" fill="none" stroke="#f1f1f1" stroke-width="6"/><path d="M412 627C425 638 434 650 439 668" fill="none" stroke="#f1f1f1" stroke-width="5"/><path d="M516 670C530 616 620 616 634 670" fill="none" stroke="#f8f8f8" stroke-width="3"/><path d="M756 666L797 652V666Z" fill="#f0f0f0"/></svg>
<span class="t" style="left:10.5px;top:287.5px;font-size:17.5px;color:#444;letter-spacing:0.41px;">Do you want to meet for lunch this afternoon?</span>
<div class="abs" style="left:383px;top:286.5px;width:1px;height:18.5px;background:#111"></div>
<span class="t" style="left:10.3px;top:349.7px;font-size:15.7px;color:#111;letter-spacing:0.26px;font-family:'Liberation Serif',serif;">John Smith</span>
<span class="t" style="left:10.3px;top:370.3px;font-size:15.5px;color:#111;letter-spacing:0.12px;font-style:italic;font-family:'Liberation Serif',serif;">Chief Operating Officer</span>
<span class="t" style="left:10.3px;top:390.2px;font-size:15.7px;color:#3a7ca8;letter-spacing:0.31px;font-family:'Liberation Serif',serif;">Homotic Inc. - North American Division</span>
<span class="t" style="left:10.3px;top:409.7px;font-size:15.7px;color:#231a7a;letter-spacing:0.52px;font-family:'Liberation Serif',serif;">john.smith@homoticcorp.onmicrosoft.com</span>
<div class="abs" style="left:10.299999999999997px;top:424px;width:291.2px;height:1px;background:#231a7a"></div>
<span class="t" style="left:10.3px;top:429.8px;font-size:14.5px;color:#1a1a1a;letter-spacing:0.72px;">(309) 430-1254</span>
<div class="abs" style="left:708px;top:166px;width:1px;height:473px;background:#e1e1e1"></div>
<span class="t" style="left:715.0px;top:171.7px;font-size:20px;color:#7c7c7c;letter-spacing:0.17px;">My Templates</span>
<svg style="left:1040px;top:176px" width="11" height="11" viewBox="0 0 11 11"><path d="M0.6 0.6L10.4 10.4M10.4 0.6L0.6 10.4" fill="none" stroke="#333" stroke-width="1.2"/></svg>
<div class="abs" style="left:734px;top:210.5px;width:309px;height:29.5px;background:#fff;border:2px solid #111;border-radius:4px"></div>
<span class="t" style="left:744.0px;top:218.9px;font-size:13.5px;color:#8c8c8c;letter-spacing:-0.16px;">Title</span>
<svg style="left:765px;top:221px" width="8" height="16" viewBox="0 0 8 16"><path d="M1.5 0.8C3 0.8 4 1.4 4 2.6V13.4C4 14.6 3 15.2 1.5 15.2M6.5 0.8C5 0.8 4 1.4 4 2.6M4 13.4C4 14.6 5 15.2 6.5 15.2" fill="none" stroke="#111" stroke-width="1.1"/></svg>
<div class="abs" style="left:734px;top:260px;width:309px;height:130px;background:#fff;border:1px solid #d0d0d0"></div>
<div class="abs" style="left:734px;top:414px;width:80px;height:30px;background:#f4f4f4"></div>
<span class="t" style="left:760.0px;top:422.4px;font-size:13.5px;color:#ececec;letter-spacing:-0.94px;">Save</span>
<div class="abs" style="left:824px;top:414px;width:83px;height:30px;background:#f4f4f4"></div>
<span class="t" style="left:845.0px;top:422.4px;font-size:13.5px;color:#333;letter-spacing:-0.09px;">Cancel</span>

</div>
</body>
</html>
